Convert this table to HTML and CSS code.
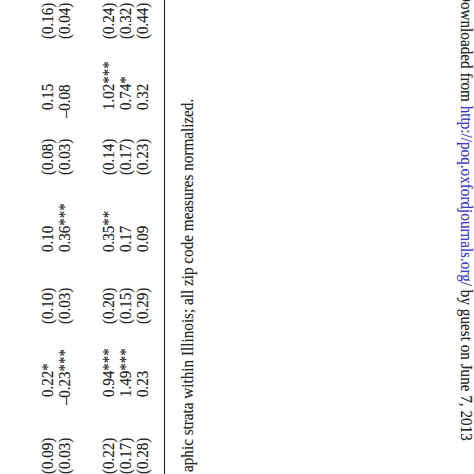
FILE: index.html
```html
<!DOCTYPE html>
<html lang="en">
<head>
<meta charset="utf-8">
<title>Table page</title>
<link rel="stylesheet" href="styles.css">
</head>
<body>
<main class="page">
  <section class="sheet">
    <div class="table">
      <div class="group">
        <span>(0.09)</span><span>0.22*</span><span>(0.10)</span><span>0.10</span><span>(0.08)</span><span>0.15</span><span>(0.16)</span>
        <span>(0.03)</span><span><span class="neg">–</span>0.23***</span><span>(0.03)</span><span>0.36***</span><span>(0.03)</span><span><span class="neg">–</span>0.08</span><span>(0.04)</span>
      </div>
      <div class="group">
        <span>(0.22)</span><span>0.94***</span><span>(0.20)</span><span>0.35**</span><span>(0.14)</span><span>1.02***</span><span>(0.24)</span>
        <span>(0.17)</span><span>1.49***</span><span>(0.15)</span><span>0.17</span><span>(0.17)</span><span>0.74*</span><span>(0.32)</span>
        <span>(0.28)</span><span>0.23</span><span>(0.29)</span><span>0.09</span><span>(0.23)</span><span>0.32</span><span>(0.44)</span>
      </div>
    </div>
    <div class="rule"></div>
    <p class="note">aphic strata within Illinois; all zip code measures normalized.</p>
  </section>
  <p class="stamp">Downloaded from <span class="link">http://poq.oxfordjournals.org/</span> by guest on June 7, 2013</p>
</main>
</body>
</html>
```
FILE: styles.css
```css
* { box-sizing: border-box; }
html, body { margin: 0; padding: 0; background: #fff; }
body { width: 474px; height: 474px; overflow: hidden; }

/* the scan is slightly stretched horizontally; lay out at 431px and stretch by 1.1 */
.page {
  display: flex;
  align-items: flex-start;
  width: 431px;
  height: 474px;
  transform: scaleX(1.1);
  transform-origin: 0 0;
  font-family: "Liberation Serif", "Times New Roman", serif;
  color: #262626;
  text-shadow: 0 0 0.8px rgba(0, 0, 0, 0.35);
}

.sheet {
  flex: none;
  writing-mode: vertical-rl;
  text-orientation: sideways;
  transform: rotate(180deg);
  inline-size: 474px;
  padding-block-start: 36.3px;
}

.table {
  font-size: 15px;
  line-height: 15.45px;
  padding-block-end: 11.45px;
}

.group {
  display: grid;
  grid-template-columns: 77px 73px 72px 77px 65px 71px 39px;
  grid-auto-rows: 15.45px;
  white-space: nowrap;
}

.group + .group { margin-block-start: 24.1px; }

.neg { margin-inline-start: -0.55em; }

.rule {
  block-size: 1.1px;
  background: #1e1e1e;
}

.note {
  margin: 0;
  margin-block-start: 12.5px;
  font-size: 15.2px;
  line-height: 15.45px;
  white-space: nowrap;
  padding-inline-start: 2px;
}

.stamp {
  margin: 0 -1.5px 0 auto;
  writing-mode: vertical-rl;
  text-orientation: sideways;
  font-size: 15.2px;
  line-height: 15.45px;
  white-space: nowrap;
  text-indent: -9px;
}

.link { color: #3f3fcc; }
```
